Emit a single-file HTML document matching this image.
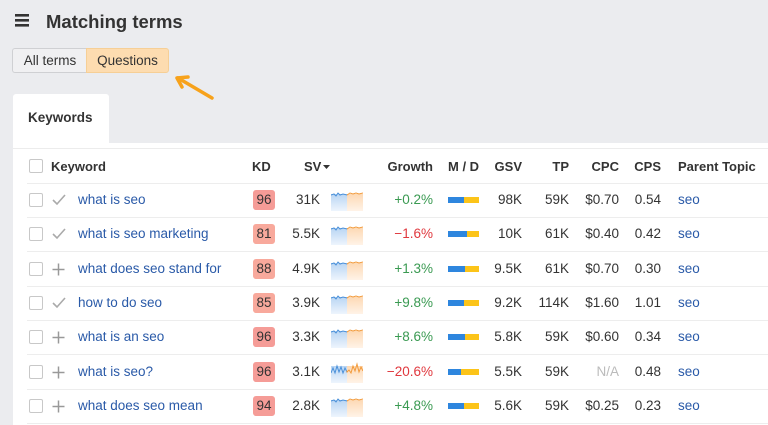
<!DOCTYPE html>
<html><head><meta charset="utf-8"><style>
*{margin:0;padding:0;box-sizing:border-box}
body{width:768px;height:425px;overflow:hidden;background:#ebecef;font-family:"Liberation Sans",sans-serif;color:#333;position:relative}
.a{position:absolute;white-space:nowrap}
.t{font-size:13.5px;line-height:16px}
.r{text-align:right}
.h{font-weight:bold;font-size:13px;color:#333}
.lk{color:#2a5aa8}
.cb{position:absolute;left:29px;width:14px;height:14px;border:1px solid #c8c8c8;border-radius:2px;background:#fff}
.kd{position:absolute;left:253px;width:22px;height:20px;border-radius:3px;color:#333;font-size:13.5px;line-height:20px;text-align:center}
.sep{position:absolute;left:27px;right:0;height:1px;background:#ededed}
</style></head><body>
<svg class="a" style="left:15px;top:14px" width="14" height="13"><rect y="0" width="14" height="2.6" fill="#333"/><rect y="5" width="14" height="2.6" fill="#333"/><rect y="10" width="14" height="2.6" fill="#333"/></svg>
<div class="a" style="left:46px;top:11px;font-size:18.5px;font-weight:bold;color:#333">Matching terms</div>
<div class="a" style="left:12px;top:48px;width:75px;height:25px;border:1px solid #cfd0d3;border-right:none;border-radius:3px 0 0 3px;background:#f0f0f2;font-size:13.5px;line-height:23px;text-align:center;color:#333">All terms</div>
<div class="a" style="left:86px;top:48px;width:83px;height:25px;border:1px solid #f6cf96;border-radius:0 3px 3px 0;background:#fddcb0;font-size:13.5px;line-height:23px;text-align:center;color:#333">Questions</div>
<svg class="a" style="left:172px;top:74px" width="42" height="26"><path d="M40 24 L6 4" stroke="#f7a21b" stroke-width="3.5" stroke-linecap="round"/><path d="M5 4 L16 3 M5 4 L10 13" stroke="#f7a21b" stroke-width="3.5" stroke-linecap="round"/></svg>
<div class="a" style="left:13px;top:94px;width:96px;height:52px;background:#fff;border-radius:3px 3px 0 0"></div>
<div class="a" style="left:28px;top:110px;font-size:13.5px;font-weight:bold;color:#333">Keywords</div>
<div class="a" style="left:13px;top:143px;width:755px;height:282px;background:#fff"></div>
<div class="a" style="left:13px;top:148px;width:755px;height:1px;background:#ececec"></div>
<div class="cb" style="top:159px"></div>
<div class="a h" style="left:51px;top:159px">Keyword</div>
<div class="a h" style="left:252px;top:159px">KD</div>
<div class="a h" style="left:304px;top:159px">SV</div>
<svg class="a" style="left:323px;top:165px" width="8" height="5"><path d="M0 0h7l-3.5 4z" fill="#333"/></svg>
<div class="a h r" style="left:380px;top:159px;width:53px">Growth</div>
<div class="a h" style="left:448px;top:159px">M / D</div>
<div class="a h r" style="left:480px;top:159px;width:42px">GSV</div>
<div class="a h r" style="left:530px;top:159px;width:39px">TP</div>
<div class="a h r" style="left:580px;top:159px;width:39px">CPC</div>
<div class="a h r" style="left:620px;top:159px;width:41px">CPS</div>
<div class="a h" style="left:678px;top:159px">Parent Topic</div>
<div class="sep" style="top:183px"></div>
<svg width="0" height="0" style="position:absolute"><defs>
<linearGradient id="gb" x1="0" y1="0" x2="0" y2="1"><stop offset="0" stop-color="#b9d5f3"/><stop offset="1" stop-color="#eef5fd"/></linearGradient>
<linearGradient id="go" x1="0" y1="0" x2="0" y2="1"><stop offset="0" stop-color="#fdd9b5"/><stop offset="1" stop-color="#fff3e8"/></linearGradient>
</defs></svg>
<div id="rows"></div>
<script>
var d=[["what is seo","c","96","#f59c97","31K","+0.2%","g",.5,"98K","59K","$0.70","0.54"],
["what is seo marketing","c","81","#f8a99c","5.5K","\u22121.6%","r",.62,"10K","61K","$0.40","0.42"],
["what does seo stand for","p","88","#f8a99c","4.9K","+1.3%","g",.55,"9.5K","61K","$0.70","0.30"],
["how to do seo","c","85","#f8a99c","3.9K","+9.8%","g",.5,"9.2K","114K","$1.60","1.01"],
["what is an seo","p","96","#f59c97","3.3K","+8.6%","g",.55,"5.8K","59K","$0.60","0.34"],
["what is seo?","p","96","#f59c97","3.1K","\u221220.6%","r",.42,"5.5K","59K","N/A","0.48"],
["what does seo mean","p","94","#f59c97","2.8K","+4.8%","g",.5,"5.6K","59K","$0.25","0.23"]];
var h="";
d.forEach(function(x,i){var y=183+i*34.3,c=y+17;var ty=c-8;
h+='<div class="cb" style="top:'+(c-7)+'px"></div>';
if(x[1]=="c")h+='<svg class="a" style="left:52px;top:'+(c-6)+'px" width="14" height="12"><path d="M1 6l4 4 8-9" stroke="#aaa" stroke-width="1.6" fill="none"/></svg>';
else h+='<svg class="a" style="left:52px;top:'+(c-6)+'px" width="13" height="13"><path d="M6.5 0.5v12M0.5 6.5h12" stroke="#999" stroke-width="1.5"/></svg>';
h+='<div class="a t lk" style="left:78px;top:'+ty+'px">'+x[0]+'</div>';
h+='<div class="kd" style="top:'+(c-10)+'px;background:'+x[3]+'">'+x[2]+'</div>';
h+='<div class="a t r" style="left:280px;width:40px;top:'+ty+'px">'+x[4]+'</div>';
var ly=(i==5)?'M0 12 L2 7 L4 12 L6 5 L8 11 L10 6 L12 12 L14 7 L16 11 L18 9 L20 12 L22 5 L24 10 L26 3 L28 11 L30 6 L32 10':'M0 6 L3 5 L5 7 L7 4 L9 6 L12 5 L16 6 L19 4 L22 5 L25 4 L28 5 L32 4';
h+='<svg class="a" style="left:331px;top:'+(c-11)+'px" width="32" height="22"><rect x="16" y="5" width="16" height="17" fill="url(#go)"/><rect x="0" y="5" width="16" height="17" fill="url(#gb)"/><path d="'+ly+'" stroke="#4a90d9" stroke-width="1" fill="none" clip-path="inset(0 16px 0 0)"/><path d="'+ly+'" stroke="#f29a3a" stroke-width="1" fill="none" clip-path="inset(0 0 0 16px)"/></svg>';
h+='<div class="a t r" style="left:370px;width:63px;top:'+ty+'px;color:'+(x[6]=="g"?"#3a9a52":"#e0383e")+'">'+x[5]+'</div>';
var w=Math.round(31*x[7]);
h+='<div class="a" style="left:448px;top:'+(c-3)+'px;width:'+w+'px;height:6px;background:#2e86de"></div><div class="a" style="left:'+(448+w)+'px;top:'+(c-3)+'px;width:'+(31-w)+'px;height:6px;background:#fcc419"></div>';
h+='<div class="a t r" style="left:480px;width:42px;top:'+ty+'px">'+x[8]+'</div>';
h+='<div class="a t r" style="left:525px;width:44px;top:'+ty+'px">'+x[9]+'</div>';
h+='<div class="a t r" style="left:575px;width:44px;top:'+ty+'px;'+(x[10]=="N/A"?"color:#bbb":"")+'">'+x[10]+'</div>';
h+='<div class="a t r" style="left:620px;width:41px;top:'+ty+'px">'+x[11]+'</div>';
h+='<div class="a t lk" style="left:678px;top:'+ty+'px">seo</div>';
h+='<div class="sep" style="top:'+Math.round(y+34)+'px"></div>';});
document.getElementById("rows").outerHTML=h;
</script>
</body></html>
